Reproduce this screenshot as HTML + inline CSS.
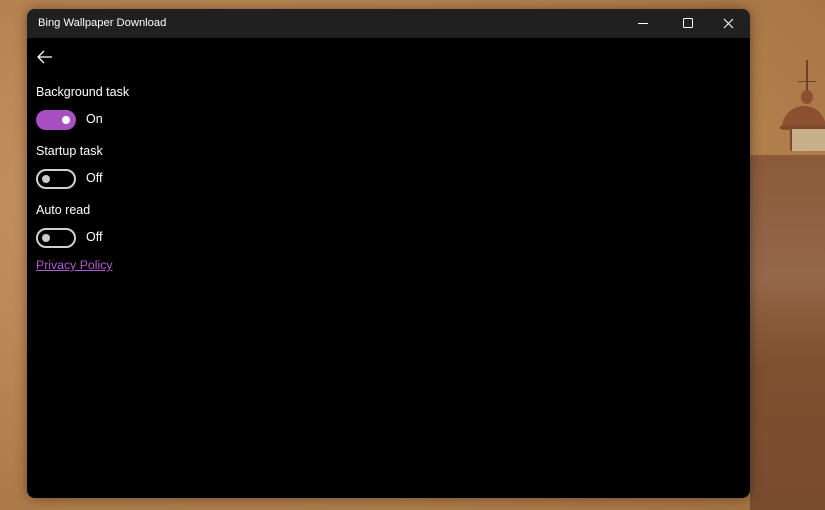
<!DOCTYPE html>
<html><head><meta charset="utf-8"><style>
body{margin:0;width:825px;height:510px;overflow:hidden;position:relative;font-family:"Segoe UI","Liberation Sans",sans-serif;
background:radial-gradient(ellipse at 30% 40%,#c99a6a 0%,#b88451 50%,#a0703f 100%);}
.bg2{position:absolute;left:750px;top:155px;width:75px;height:355px;background:linear-gradient(#8a5a3a,#95684a 35%,#8a5c3c 45%,#7e5030 60%,#7a4c2e);}
.dome{position:absolute;left:782px;top:106px;width:44px;height:24px;border-radius:22px 22px 0 0;background:#8a5030;}
.lamp{position:absolute;left:790px;top:128px;width:35px;height:23px;background:#c9b08c;border-left:2px solid #7a4a2c;border-right:2px solid #7a4a2c;}
.rim{position:absolute;left:780px;top:126px;width:45px;height:3px;background:#7a4a2c}
.ball{position:absolute;left:801px;top:90px;width:12px;height:14px;border-radius:50%;background:#8a5030;}
.mast{position:absolute;left:806px;top:60px;width:1.5px;height:32px;background:#6e4128;}
.vane{position:absolute;left:798px;top:81px;width:18px;height:1px;background:#6e4128;}
.win{position:absolute;left:27px;top:9px;width:723px;height:489px;background:#000;border-radius:8px;overflow:hidden;box-shadow:0 0 12px rgba(0,0,0,.4);}
.tb{height:29px;background:#202020;color:#fff;font-size:11.2px;line-height:29px;padding-left:11px;position:relative;}
.ctl{position:absolute;top:0;height:29px;}
.t{position:absolute;color:#fff;font-size:12.5px;}
.tog{position:absolute;left:9px;width:36px;height:16px;border-radius:10px;border:2px solid #d0d0d0;}
.tog.on{background:#a94fc4;border-color:#a94fc4;}
.tog i{position:absolute;top:4px;width:8px;height:8px;border-radius:50%;background:#ccc;left:4px}
.tog.on i{left:auto;right:4px;background:#fff}
a{position:absolute;left:9px;top:249px;color:#b05ad0;font-size:12.3px;text-decoration:underline}
</style></head><body>
<div class="bg2"></div><div class="mast"></div><div class="vane"></div><div class="ball"></div><div class="dome"></div><div class="lamp"></div><div class="rim"></div>
<div class="win">
<div class="tb">Bing Wallpaper Download
<svg class="ctl" style="left:600px" width="120" height="29"><path d="M11 14.5h10" stroke="#fff" stroke-width="1"/><rect x="56.5" y="9.5" width="9" height="9" rx="1" fill="none" stroke="#fff"/><path d="M97 10l9 9M106 10l-9 9" stroke="#fff"/></svg>
</div>
<svg style="position:absolute;left:9px;top:40px" width="18" height="16"><path d="M16 8H2M8 2L2 8l6 6" stroke="#fff" stroke-width="1.3" fill="none"/></svg>
<div class="t" style="left:9px;top:76px">Background task</div>
<div class="tog on" style="top:101px"><i></i></div><div class="t" style="left:59px;top:103px">On</div>
<div class="t" style="left:9px;top:135px">Startup task</div>
<div class="tog" style="top:160px"><i></i></div><div class="t" style="left:59px;top:162px">Off</div>
<div class="t" style="left:9px;top:194px">Auto read</div>
<div class="tog" style="top:219px"><i></i></div><div class="t" style="left:59px;top:221px">Off</div>
<a>Privacy Policy</a>
</div>
</body></html>
